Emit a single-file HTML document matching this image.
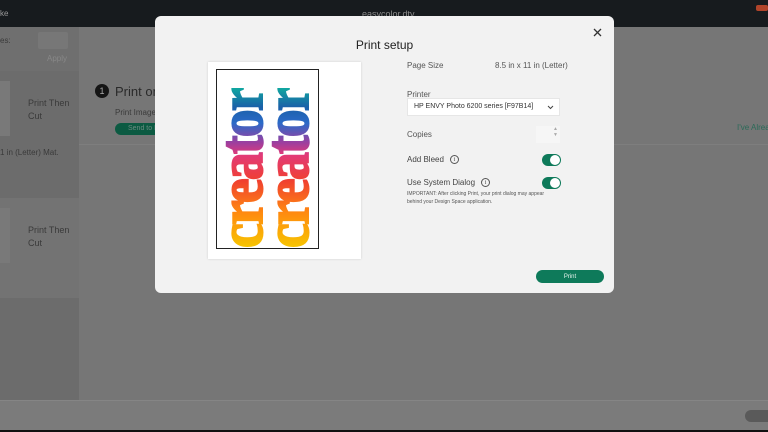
<!DOCTYPE html>
<html><head><meta charset="utf-8"><style>
*{margin:0;padding:0;box-sizing:border-box}
body{width:768px;height:432px;overflow:hidden;position:relative;background:#767676;font-family:"Liberation Sans",sans-serif}
.top{position:absolute;left:0;top:0;width:768px;height:27px;background:#171b1e}
.side{position:absolute;left:0;top:27px;width:79px;height:373px;background:#6c6c6c}
.bottom{position:absolute;left:0;top:400px;width:768px;height:30px;background:#7b7b7b;border-top:1px solid #858585}
.black{position:absolute;left:0;top:430px;width:768px;height:2px;background:#111}
.t{position:absolute;color:#3a3a3a;font-size:8px;white-space:nowrap}
.modal{position:absolute;left:155px;top:16px;width:459px;height:277px;background:#f2f2f2;border-radius:6px}
.lbl{position:absolute;font-size:8px;color:#555;white-space:nowrap}
.tog{position:absolute;width:19px;height:12px;border-radius:6px;background:#0e7a5a}
.tog:after{content:"";position:absolute;right:1px;top:1px;width:10px;height:10px;border-radius:50%;background:#fff}
.info{display:inline-block;width:9px;height:9px;border:1px solid #555;border-radius:50%;font-size:6px;text-align:center;line-height:8px;margin-left:6px;vertical-align:middle;font-family:"Liberation Serif",serif}
.art{position:absolute;font-family:"Liberation Serif",serif;font-weight:bold;font-size:62px;transform:rotate(-90deg) scaleX(0.9);transform-origin:0 0;white-space:nowrap;letter-spacing:-2px;background:linear-gradient(90deg,#f7c600 0%,#ff8a10 22%,#f04030 42%,#e23a78 58%,#9a3fa0 66%,#2b6ac8 78%,#1a60a8 88%,#10a8a0 100%);-webkit-background-clip:text;background-clip:text;color:transparent;-webkit-text-stroke:2px transparent;line-height:1}
</style></head><body>
<div class="top"></div>
<div class="t" style="left:0;top:9px;color:#9a9a9a">ke</div>
<div class="t" style="left:362px;top:9px;color:#8a8a8a;font-size:9px">easycolor.dty</div>
<div style="position:absolute;left:756px;top:5px;width:12px;height:6px;background:#b0442a;border-radius:2px"></div>
<div class="side"></div>
<div style="position:absolute;left:0;top:27px;width:79px;height:44px;background:#6f6f6f"></div>
<div class="t" style="left:0;top:36px">es:</div>
<div style="position:absolute;left:38px;top:32px;width:30px;height:17px;background:#777;border-radius:2px"></div>
<div class="t" style="left:47px;top:54px;color:#888">Apply</div>
<div style="position:absolute;left:0;top:81px;width:10px;height:55px;background:#797979"></div>
<div class="t" style="left:28px;top:97px;font-size:9px;line-height:13px">Print Then<br>Cut</div>
<div class="t" style="left:0;top:148px">1 in (Letter) Mat.</div>
<div style="position:absolute;left:0;top:198px;width:79px;height:100px;background:#737373"></div>
<div style="position:absolute;left:0;top:208px;width:10px;height:55px;background:#797979"></div>
<div class="t" style="left:28px;top:224px;font-size:9px;line-height:13px">Print Then<br>Cut</div>
<div style="position:absolute;left:95px;top:84px;width:14px;height:14px;border-radius:50%;background:#151515;color:#aaa;font-size:9px;text-align:center;line-height:14px">1</div>
<div class="t" style="left:115px;top:84px;font-size:13px;color:#2a2a2a">Print on</div>
<div class="t" style="left:115px;top:108px">Print Images</div>
<div style="position:absolute;left:115px;top:123px;width:50px;height:12px;border-radius:6px;background:#0c5a42"></div>
<div class="t" style="left:128px;top:125px;color:#6a8a80;font-size:7px">Send to P</div>
<div class="t" style="left:737px;top:123px;color:#2a6a58">I've Alrea</div>
<div style="position:absolute;left:79px;top:144px;width:689px;height:1px;background:#7e7e7e"></div>
<div class="bottom"></div>
<div style="position:absolute;left:745px;top:410px;width:30px;height:12px;border-radius:6px;background:#5a5a5a"></div>
<div class="black"></div>

<div class="modal">
<div style="position:absolute;left:0;width:459px;top:22px;text-align:center;font-size:12px;color:#222">Print setup</div>
<svg style="position:absolute;left:438px;top:12px" width="9" height="9" viewBox="0 0 9 9"><path d="M1 1L8 8M8 1L1 8" stroke="#333" stroke-width="1.3"/></svg>
<div style="position:absolute;left:53px;top:46px;width:153px;height:197px;background:#fff;box-shadow:0 0 2px #ccc"></div>
<div style="position:absolute;left:61px;top:53px;width:103px;height:180px;border:1px solid #222;background:#fff;overflow:hidden">
<div class="art" style="left:-6px;top:178px">creator</div>
<div class="art" style="left:40px;top:178px">creator</div>
</div>
<div class="lbl" style="left:252px;top:45px">Page Size</div>
<div class="lbl" style="left:340px;top:45px">8.5 in x 11 in (Letter)</div>
<div class="lbl" style="left:252px;top:74px">Printer</div>
<div style="position:absolute;left:252px;top:82px;width:153px;height:18px;background:#fff;border:1px solid #e6e6e6"></div>
<div class="lbl" style="left:259px;top:87px;color:#333;font-size:7px">HP ENVY Photo 6200 series [F97B14]</div>
<svg style="position:absolute;left:392px;top:89px" width="7" height="5" viewBox="0 0 7 5"><path d="M1 1L3.5 3.5L6 1" stroke="#444" fill="none"/></svg>
<div class="lbl" style="left:252px;top:114px">Copies</div>
<div style="position:absolute;left:381px;top:110px;width:24px;height:17px;background:#f6f6f6"></div>
<div class="lbl" style="left:398px;top:110px;font-size:5px;color:#aaa;line-height:6px">▲<br>▼</div>
<div class="lbl" style="left:252px;top:139px;color:#444">Add Bleed<span class="info">i</span></div>
<div class="tog" style="left:387px;top:138px"></div>
<div class="lbl" style="left:252px;top:162px;color:#444">Use System Dialog<span class="info">i</span></div>
<div class="tog" style="left:387px;top:161px"></div>
<div class="lbl" style="left:252px;top:174px;font-size:5px;line-height:8px;color:#555">IMPORTANT: After clicking Print, your print dialog may appear<br>behind your Design Space application.</div>
<div style="position:absolute;left:381px;top:254px;width:68px;height:13px;border-radius:7px;background:#0e7a5a;color:#e8f4ef;font-size:6px;display:flex;align-items:center;justify-content:center">Print</div>
</div>
</body></html>
